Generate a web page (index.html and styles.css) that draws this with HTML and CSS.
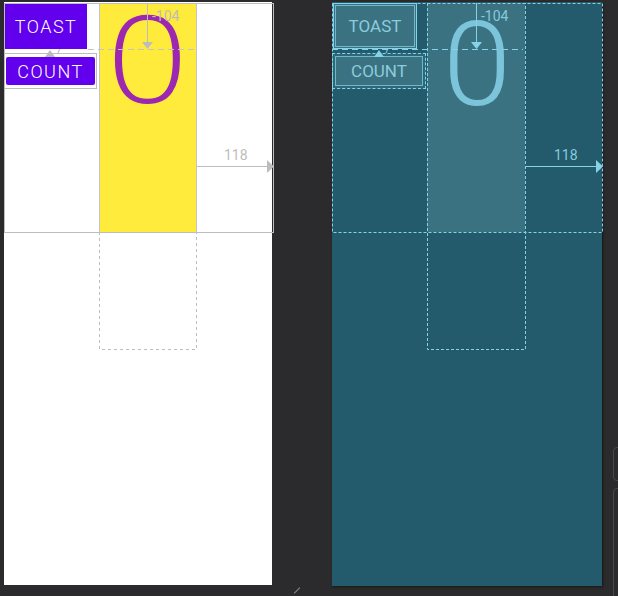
FILE: index.html
```html
<!DOCTYPE html>
<html lang="en">
<head>
  <meta charset="UTF-8">
  <meta name="viewport" content="width=device-width, initial-scale=1.0">
  <title>activity_main.xml - Layout Editor</title>
  <link rel="stylesheet" href="styles.css">
</head>
<body>
  <div class="editor">
    <!-- Design surface -->
    <div class="screen design">
      <div class="column"></div>
      <div class="hint seven">7</div>
      <div class="widget toast">TOAST</div>
      <div class="count-frame">
        <div class="widget count">COUNT</div>
      </div>
      <div class="big-zero">0</div>
      <svg class="guides" width="280" height="360">
        <rect x="0.5" y="1.5" width="269" height="229" fill="none" stroke="#bdbdbd"/>
        <line x1="95.5" y1="1" x2="95.5" y2="230" stroke="#c4c4c4"/>
        <line x1="192.5" y1="1" x2="192.5" y2="230" stroke="#c4c4c4"/>
        <path d="M95.5 230 V347.5 H192.5 V230" fill="none" stroke="#bdbdbd" stroke-dasharray="3 3"/>
        <line x1="84" y1="47.5" x2="191" y2="47.5" stroke="#c4c4c4" stroke-dasharray="6 4"/>
        <line x1="143.5" y1="1" x2="143.5" y2="41" stroke="#bdbdbd"/>
        <polygon points="138,40 149,40 143.5,47" fill="#bdbdbd"/>
        <line x1="193" y1="164.5" x2="264" y2="164.5" stroke="#bdbdbd"/>
        <polygon points="263,158 263,171 270,164.5" fill="#bdbdbd"/>
        <polygon points="41,55 51,55 46,48" fill="#bdbdbd"/>
      </svg>
      <div class="label minus">-104</div>
      <div class="label right">118</div>
    </div>

    <!-- Blueprint surface -->
    <div class="screen blueprint">
      <div class="column"></div>
      <div class="hint seven">7</div>
      <div class="widget toast">TOAST</div>
      <div class="count-frame">
        <div class="widget count">COUNT</div>
      </div>
      <div class="big-zero">0</div>
      <svg class="guides" width="280" height="360">
        <rect x="0.5" y="1.5" width="270" height="229" fill="none" stroke="#86d2e8" stroke-dasharray="3 2"/>
        <path d="M95.5 1 V347.5 H193.5 V1" fill="none" stroke="#86d2e8" stroke-dasharray="3 2"/>
        <line x1="0" y1="47.5" x2="191" y2="47.5" stroke="#86d2e8" stroke-dasharray="6 4"/>
        <line x1="144.5" y1="1" x2="144.5" y2="41" stroke="#86d2e8"/>
        <polygon points="139,40 150,40 144.5,47" fill="#86d2e8"/>
        <line x1="194" y1="164.5" x2="265" y2="164.5" stroke="#86d2e8"/>
        <polygon points="264,158 264,171 271,164.5" fill="#86d2e8"/>
        <polygon points="42,55 52,55 47,48" fill="#86d2e8"/>
      </svg>
      <div class="label minus">-104</div>
      <div class="label right">118</div>
    </div>

    <div class="side-tab top"></div>
    <div class="side-tab bottom"></div>
    <div class="resize-grip"></div>
  </div>
</body>
</html>
```

FILE: styles.css
```css
body {
  margin: 0;
  background-color: #2b2b2d;
  font-family: Roboto, "Noto Sans", sans-serif;
  overflow: hidden;
}
.editor {
  position: relative;
  width: 618px;
  height: 596px;
  display: flex;
  align-items: flex-start;
  gap: 60px;
  padding: 2px 0 0 4px;
  box-sizing: border-box;
}
.screen {
  position: relative;
  flex-shrink: 0;
}
.screen.design {
  width: 268px;
  height: 583px;
  background-color: #ffffff;
}
.screen.blueprint {
  width: 270px;
  height: 584px;
  background-color: #235b6d;
  box-shadow: 1px 1px 2px rgba(0, 0, 0, 0.5);
}
.guides {
  position: absolute;
  left: 0;
  top: 0;
  overflow: visible;
}

/* widgets */
.widget {
  display: flex;
  align-items: center;
  justify-content: center;
  box-sizing: border-box;
}
.toast {
  position: absolute;
  left: 1px;
  top: 1px;
  width: 82px;
  height: 46px;
}
.count-frame {
  position: absolute;
  left: 0;
  top: 51px;
  width: 93px;
  height: 36px;
  box-sizing: border-box;
  padding: 3px 0;
}
.count {
  height: 100%;
}
.column {
  position: absolute;
  left: 95px;
  top: 1px;
  width: 97px;
  height: 229px;
}
.big-zero {
  position: absolute;
  left: 95px;
  width: 97px;
  height: 100px;
  line-height: 100px;
  text-align: center;
  font-weight: 300;
}
.label {
  position: absolute;
  font-size: 14px;
  line-height: 1;
}
.label.minus {
  left: 148px;
  top: 7px;
}
.label.right {
  left: 220px;
  top: 146px;
}
.hint {
  position: absolute;
  font-size: 11px;
  line-height: 1;
}
.seven {
  left: 52px;
  top: 42px;
}

/* design look */
.design .toast,
.design .count {
  background-color: #6200ee;
  color: #ffffff;
  font-size: 18px;
  font-weight: 300;
  letter-spacing: 1.5px;
}
.design .count {
  border-radius: 2px;
  margin: 0 1px;
}
.design .count-frame {
  border: 1px solid #bdbdbd;
}
.design .column {
  background-color: #ffeb3b;
}
.design .big-zero {
  top: 4px;
  font-family: "Open Sans", sans-serif;
  font-size: 121px;
  color: #9c27b0;
  transform: scaleX(1.18);
}
.design .label,
.design .hint {
  color: #bdbdbd;
}

/* blueprint look */
.blueprint .toast {
  width: 84px;
  background-color: #3a7282;
  border: 1px solid #86d2e8;
  box-shadow: inset 0 0 0 1px #3a7282, inset 0 0 0 2px #6fb8cc;
}
.blueprint .toast,
.blueprint .count {
  color: #8ccbdc;
  font-size: 17px;
}
.blueprint .count-frame {
  width: 94px;
  border: 1px dashed #86d2e8;
  padding: 2px;
  background-color: #2d6778;
}
.blueprint .count {
  background-color: #3a7282;
  border: 1px solid #6fb8cc;
}
.blueprint .column {
  width: 98px;
  background-color: #3a7282;
}
.blueprint .big-zero {
  left: 96px;
  width: 98px;
  top: 13px;
  font-size: 117px;
  color: #7cc4da;
  transform: scaleX(1.05);
}
.blueprint .label {
  color: #86c9dc;
}
.blueprint .label.minus {
  left: 149px;
}
.blueprint .label.right {
  left: 222px;
}
.blueprint .hint {
  color: #86c9dc;
}

/* surrounding chrome */
.side-tab {
  position: absolute;
  left: 613px;
  width: 10px;
  border: 1px solid #46484b;
  border-radius: 4px;
}
.side-tab.top {
  top: 447px;
  height: 32px;
}
.side-tab.bottom {
  top: 488px;
  height: 120px;
}
.resize-grip {
  position: absolute;
  left: 293px;
  top: 590px;
  width: 8px;
  height: 1px;
  background-color: #8a8a8a;
  transform: rotate(-45deg);
}
```
